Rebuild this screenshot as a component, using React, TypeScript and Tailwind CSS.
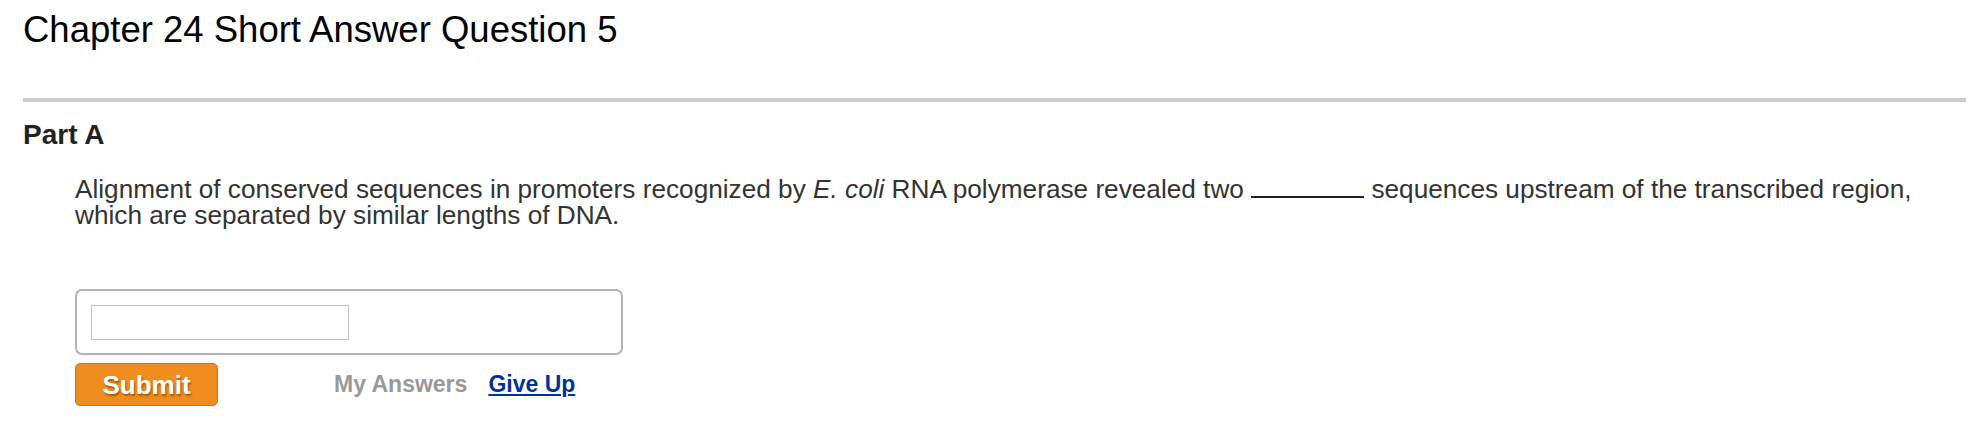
export default function App() {
  return (
    <div className="w-[1974px] h-[424px] bg-white text-[#333] font-['Liberation_Sans',Arial,sans-serif]">
      <div className="pl-[23px] pr-[8px]">
        <h1 className="pt-[8px] text-[36.5px] leading-[44px] text-black">Chapter 24 Short Answer Question 5</h1>
        <div className="mt-[46px] h-[4px] bg-[#cccccc]" />
        <h2 className="mt-[18px] text-[28px] leading-[30px] font-bold text-[#222]">Part A</h2>
        <div className="pl-[52px]">
          <p className="mt-[26px] text-[26.2px] leading-[26px] text-[#333]">
            Alignment of conserved sequences in promoters recognized by <i>E. coli</i> RNA polymerase revealed two{" "}
            <span className="inline-block w-[113px] border-b-2 border-[#222] align-baseline" />{" "}
            sequences upstream of the transcribed region, which are separated by similar lengths of DNA.
          </p>
          <div className="mt-[61px] w-[548px] h-[66px] rounded-[7px] border-2 border-[#b3b3b3] flex items-center px-[14px]">
            <input className="w-[258px] h-[35px] border border-[#c4c4c4] outline-none" />
          </div>
          <div className="mt-[8px] flex items-center">
            <button className="w-[143px] h-[43px] rounded-[5px] bg-[#f08d1f] border border-[#d0702c] text-white font-bold text-[26px] leading-none [text-shadow:1px_2px_2px_rgba(120,50,0,0.6)]">
              Submit
            </button>
            <span className="ml-[116px] text-[23px] font-bold text-[#999]">My Answers</span>
            <a className="ml-[21px] text-[23px] font-bold text-[#003399] underline">Give Up</a>
          </div>
        </div>
      </div>
    </div>
  );
}
